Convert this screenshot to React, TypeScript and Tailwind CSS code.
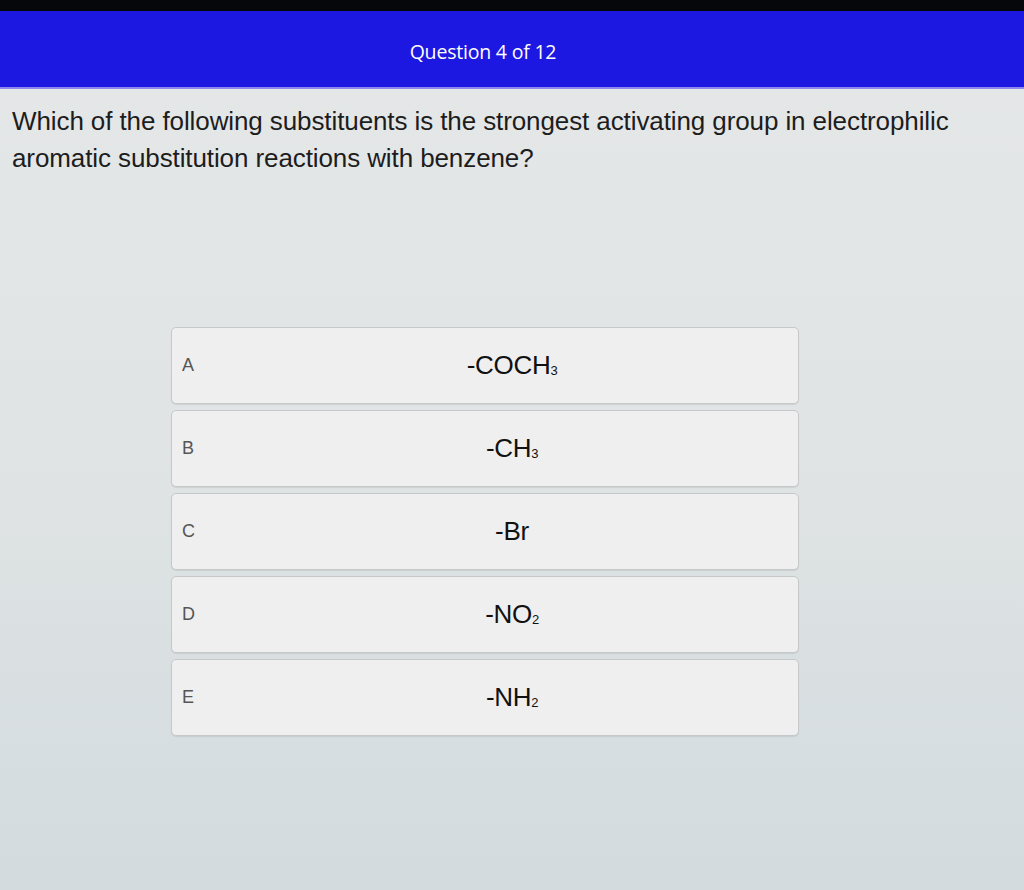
const options = [
  { letter: "A", base: "-COCH", sub: "3" },
  { letter: "B", base: "-CH", sub: "3" },
  { letter: "C", base: "-Br", sub: "" },
  { letter: "D", base: "-NO", sub: "2" },
  { letter: "E", base: "-NH", sub: "2" },
];

export default function App() {
  return (
    <div
      className="w-[1024px] h-[890px] overflow-hidden flex flex-col bg-gradient-to-b from-[#e6e8e8] via-[#e0e4e4] to-[#d3dbdf]"
      style={{ fontFamily: '"Liberation Sans", Arial, sans-serif' }}
    >
      <div className="h-[11px] bg-[#05070a] shrink-0" />
      <header className="h-[78px] shrink-0 bg-[#1d17e2] border-b-2 border-[#8d86ee] flex items-center justify-center">
        <span
          className="text-white text-[19.5px] tracking-[-0.2px] ml-[-58px] mt-[5px]"
          style={{ fontFamily: '"Open Sans", sans-serif' }}
        >
          Question 4 of 12
        </span>
      </header>

      <p className="mt-[14px] pl-[12px] pr-[20px] text-[26px] leading-[37px] text-[#1d1d1d] tracking-[-0.1px]">
        Which of the following substituents is the strongest activating group in electrophilic
        <br />
        aromatic substitution reactions with benzene?
      </p>

      <div className="mt-[150px] ml-[171px] w-[628px] flex flex-col gap-[6px]">
        {options.map((o) => (
          <div
            key={o.letter}
            className="h-[77px] rounded-[5px] bg-[#efefef] border border-[#c6c9c9] shadow-[0_1px_1px_rgba(0,0,0,0.08)] flex items-center pl-[10px]"
          >
            <span className="w-[44px] text-[18px] text-[#555]">{o.letter}</span>
            <span className="flex-1 text-center text-[26px] text-[#111] tracking-[-0.3px]">
              {o.base}
              {o.sub && (
                <sub className="text-[13px] align-baseline relative top-[1px]">{o.sub}</sub>
              )}
            </span>
          </div>
        ))}
      </div>
    </div>
  );
}
